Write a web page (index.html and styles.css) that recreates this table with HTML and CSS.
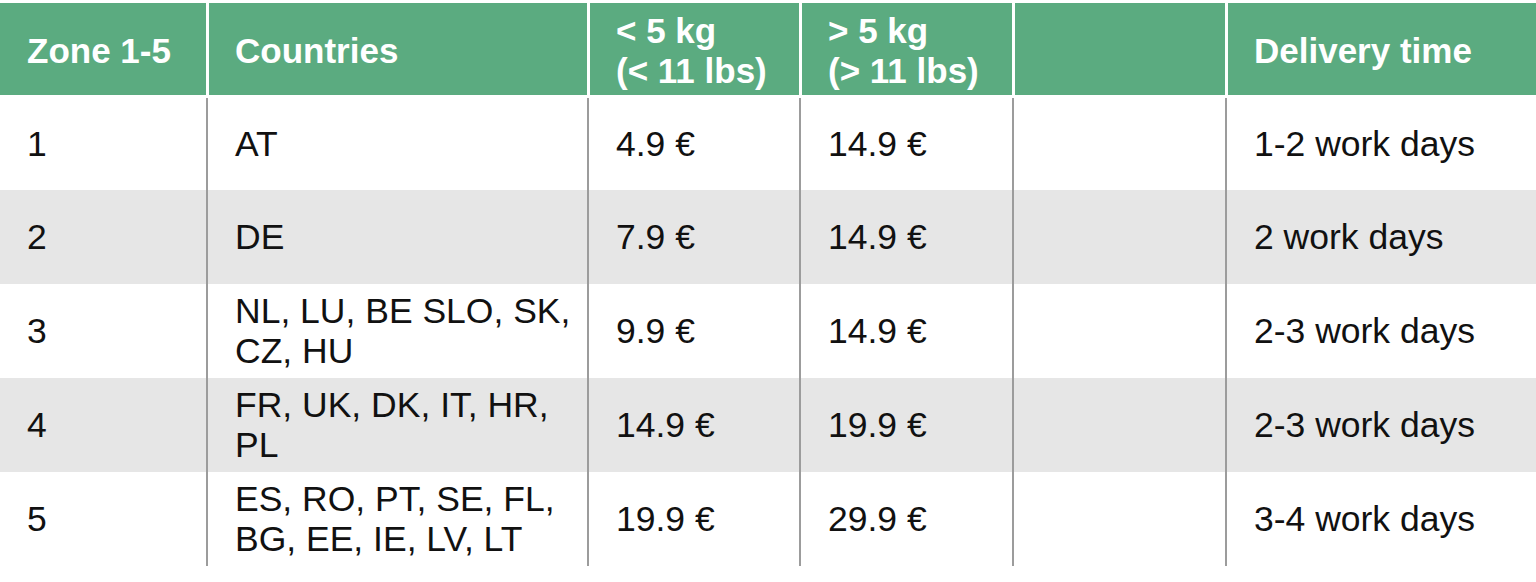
FILE: index.html
```html
<!DOCTYPE html>
<html lang="en">
<head>
<meta charset="utf-8">
<title>Shipping zones</title>
<link rel="stylesheet" href="styles.css">
</head>
<body>
<table class="rates">
  <thead>
    <tr>
      <th class="c1">Zone 1-5</th>
      <th class="c2">Countries</th>
      <th class="c3">&lt; 5 kg<br>(&lt; 11 lbs)</th>
      <th class="c4">&gt; 5 kg<br>(&gt; 11 lbs)</th>
      <th class="c5"></th>
      <th class="c6">Delivery time</th>
    </tr>
  </thead>
  <tbody>
    <tr class="first">
      <td>1</td><td>AT</td><td>4.9 €</td><td>14.9 €</td><td></td><td>1-2 work days</td>
    </tr>
    <tr class="alt">
      <td>2</td><td>DE</td><td>7.9 €</td><td>14.9 €</td><td></td><td>2 work days</td>
    </tr>
    <tr>
      <td>3</td><td>NL, LU, BE SLO, SK, CZ, HU</td><td>9.9 €</td><td>14.9 €</td><td></td><td>2-3 work days</td>
    </tr>
    <tr class="alt">
      <td>4</td><td>FR, UK, DK, IT, HR, PL</td><td>14.9 €</td><td>19.9 €</td><td></td><td>2-3 work days</td>
    </tr>
    <tr>
      <td>5</td><td>ES, RO, PT, SE, FL, BG, EE, IE, LV, LT</td><td>19.9 €</td><td>29.9 €</td><td></td><td>3-4 work days</td>
    </tr>
  </tbody>
</table>
</body>
</html>
```
FILE: styles.css
```css
html, body {
  margin: 0;
  padding: 0;
  background: #ffffff;
}

body {
  font-family: "Liberation Sans", Arial, Helvetica, sans-serif;
  color: #111111;
}

.rates {
  margin-top: 3px;
  width: 1536px;
  table-layout: fixed;
  border-collapse: separate;
  border-spacing: 0;
}

.rates th,
.rates td {
  box-sizing: border-box;
  text-align: left;
  vertical-align: middle;
}

.rates th {
  height: 95px;
  background: #5bab80;
  color: #ffffff;
  font-weight: bold;
  font-size: 35px;
  line-height: 40px;
  padding: 4px 0 0 26px;
  border-left: 3px solid #ffffff;
  border-bottom: 3px solid #ffffff;
}

.rates th.c1 { width: 206px; border-left: 0; padding-left: 27px; }
.rates th.c2 { width: 381px; }
.rates th.c3 { width: 212px; }
.rates th.c4 { width: 213px; }
.rates th.c5 { width: 213px; }
.rates th.c6 { width: 311px; }

.rates td {
  height: 94px;
  font-size: 35.5px;
  line-height: 40px;
  padding: 0 0 0 27px;
  border-left: 2px solid #9c9c9c;
}

.rates td:first-child {
  border-left: 0;
  padding-left: 27px;
}

.rates tr.first td {
  height: 92px;
}

.rates tr.alt td {
  background: #e6e6e6;
}
```
